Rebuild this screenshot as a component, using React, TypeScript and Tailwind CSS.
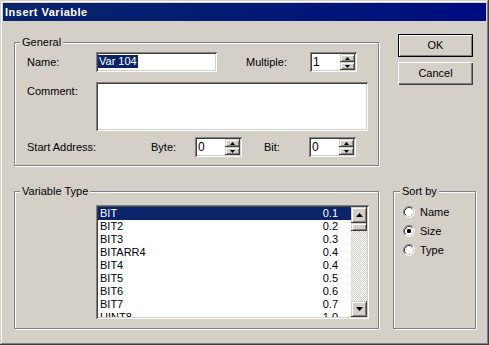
import React from "react";

const sunken =
  "shadow-[inset_1px_1px_0_#808080,inset_-1px_-1px_0_#ffffff,inset_2px_2px_0_#404040,inset_-2px_-2px_0_#d4d0c8]";
const raised =
  "shadow-[inset_1px_1px_0_#ffffff,inset_-1px_-1px_0_#404040,inset_-2px_-2px_0_#808080]";
const raisedSmall =
  "shadow-[inset_-1px_-1px_0_#404040,inset_1px_1px_0_#d4d0c8,inset_2px_2px_0_#ffffff,inset_-2px_-2px_0_#808080]";
const etched = "border border-[#808080] shadow-[inset_1px_1px_0_#ffffff,1px_1px_0_#ffffff]";

function Arrow({ up, w = 5, h = 3 }: { up: boolean; w?: number; h?: number }) {
  return (
    <svg width={w} height={h} viewBox={`0 0 ${w} ${h}`} className="block">
      {up ? (
        <polygon points={`0,${h} ${w / 2},0 ${w},${h}`} fill="#000" />
      ) : (
        <polygon points={`0,0 ${w},0 ${w / 2},${h}`} fill="#000" />
      )}
    </svg>
  );
}

function Spin({ value }: { value: string }) {
  return (
    <div className={`w-[47px] h-[20px] bg-white p-[2px] flex ${sunken}`}>
      <div className="flex-1 pl-[1px] leading-[16px] text-[12px]">{value}</div>
      <div className="w-[15px] flex flex-col">
        <div className={`h-[8px] bg-[#d4d0c8] flex items-center justify-center ${raisedSmall}`}>
          <Arrow up w={5} h={3} />
        </div>
        <div className={`h-[8px] bg-[#d4d0c8] flex items-center justify-center ${raisedSmall}`}>
          <Arrow up={false} w={5} h={3} />
        </div>
      </div>
    </div>
  );
}

function Radio({ checked }: { checked?: boolean }) {
  return (
    <svg width="12" height="12" viewBox="0 0 12 12" className="block shrink-0">
      <circle cx="6" cy="6" r="4.5" fill="#fff" />
      <path d="M2.11 9.89 A5.5 5.5 0 0 1 9.89 2.11" stroke="#808080" strokeWidth="1" fill="none" />
      <path d="M9.89 2.11 A5.5 5.5 0 0 1 2.11 9.89" stroke="#ffffff" strokeWidth="1" fill="none" />
      <path d="M2.82 9.18 A4.5 4.5 0 0 1 9.18 2.82" stroke="#404040" strokeWidth="1" fill="none" />
      <path d="M9.18 2.82 A4.5 4.5 0 0 1 2.82 9.18" stroke="#d4d0c8" strokeWidth="1" fill="none" />
      {checked && <rect x="4" y="4" width="4" height="4" rx="1.2" fill="#000" />}
    </svg>
  );
}

const items: [string, string][] = [
  ["BIT", "0.1"],
  ["BIT2", "0.2"],
  ["BIT3", "0.3"],
  ["BITARR4", "0.4"],
  ["BIT4", "0.4"],
  ["BIT5", "0.5"],
  ["BIT6", "0.6"],
  ["BIT7", "0.7"],
  ["UINT8", "1.0"],
];

export default function App() {
  return (
    <div className="w-[489px] h-[345px] bg-[#d4d0c8] p-[3px] flex flex-col font-['Liberation_Sans',Arial,sans-serif] text-[11px] leading-[13px] text-black shadow-[inset_-1px_-1px_0_#404040,inset_1px_1px_0_#d4d0c8,inset_-2px_-2px_0_#808080,inset_2px_2px_0_#ffffff] overflow-hidden select-none">
      {/* Title bar */}
      <div className="h-[18px] shrink-0 bg-gradient-to-r from-[#0a246a] to-[#000a80] flex items-center pl-[2px]">
        <span className="text-white font-bold tracking-[0.5px]">Insert Variable</span>
      </div>

      {/* Body */}
      <div className="grid grid-cols-[365px_83px] gap-x-[14px] pl-[11px]">
        {/* General */}
        <div className={`relative mt-[21px] h-[124px] ${etched} pt-[9px] pl-[12px]`}>
          <span className="absolute left-[5px] top-[-7px] px-[2px] bg-[#d4d0c8]">General</span>
          <div className="flex items-center h-[20px]">
            <div className="w-[69px]">Name:</div>
            <div className={`w-[121px] h-[20px] bg-white p-[2px] ${sunken}`}>
              <span className="inline-block mt-[1px] bg-[#0a246a] text-white pl-[1px] pr-[1px] leading-[13px]">
                Var 104
              </span>
            </div>
            <div className="w-[29px]" />
            <div className="w-[64px]">Multiple:</div>
            <Spin value="1" />
          </div>
          <div className="flex mt-[10px]">
            <div className="w-[69px] pt-[3px]">Comment:</div>
            <div className={`w-[272px] h-[49px] bg-white ${sunken}`} />
          </div>
          <div className="flex items-center h-[20px] mt-[6px]">
            <div className="w-[124px]">Start Address:</div>
            <div className="w-[44px]">Byte:</div>
            <Spin value="0" />
            <div className="w-[22px]" />
            <div className="w-[45px]">Bit:</div>
            <Spin value="0" />
          </div>
        </div>

        {/* Buttons */}
        <div className="mt-[13px] pl-[5px] flex flex-col gap-[5px]">
          <div className="w-[75px] h-[23px] border border-black">
            <div className="w-full h-full flex items-center justify-center shadow-[inset_1px_1px_0_#ffffff,inset_-1px_-1px_0_#808080]">
              OK
            </div>
          </div>
          <div className={`w-[75px] h-[23px] flex items-center justify-center ${raised}`}>Cancel</div>
        </div>

        {/* Variable Type */}
        <div className={`relative mt-[25px] h-[138px] ${etched} pt-[13px] pl-[81px]`}>
          <span className="absolute left-[5px] top-[-7px] px-[2px] bg-[#d4d0c8]">Variable Type</span>
          <div className={`w-[273px] h-[114px] bg-white p-[2px] flex ${sunken}`}>
            <div className="flex-1 overflow-hidden">
              {items.map(([name, size], i) => (
                <div
                  key={name}
                  className={`h-[13px] flex justify-between pl-[2px] pr-[13px] ${
                    i === 0 ? "bg-[#0a246a] text-white" : ""
                  }`}
                >
                  <span>{name}</span>
                  <span>{size}</span>
                </div>
              ))}
            </div>
            <div className="w-[16px] flex flex-col">
              <div className={`h-[16px] shrink-0 bg-[#d4d0c8] flex items-center justify-center ${raisedSmall}`}>
                <Arrow up w={7} h={4} />
              </div>
              <div className={`h-[8px] shrink-0 bg-[#d4d0c8] ${raisedSmall}`} />
              <div className="flex-1 bg-[repeating-conic-gradient(#ffffff_0%_25%,#d4d0c8_0%_50%)] [background-size:2px_2px]" />
              <div className={`h-[16px] shrink-0 bg-[#d4d0c8] flex items-center justify-center ${raisedSmall}`}>
                <Arrow up={false} w={7} h={4} />
              </div>
            </div>
          </div>
        </div>

        {/* Sort by */}
        <div className={`relative mt-[25px] h-[138px] ${etched} pt-[14px] pl-[9px] flex flex-col gap-[7px]`}>
          <span className="absolute left-[6px] top-[-7px] px-[2px] bg-[#d4d0c8]">Sort by</span>
          {[
            ["Name", false],
            ["Size", true],
            ["Type", false],
          ].map(([label, checked]) => (
            <div key={label as string} className="h-[12px] flex items-center gap-[5px]">
              <Radio checked={checked as boolean} />
              <span>{label as string}</span>
            </div>
          ))}
        </div>
      </div>
    </div>
  );
}
